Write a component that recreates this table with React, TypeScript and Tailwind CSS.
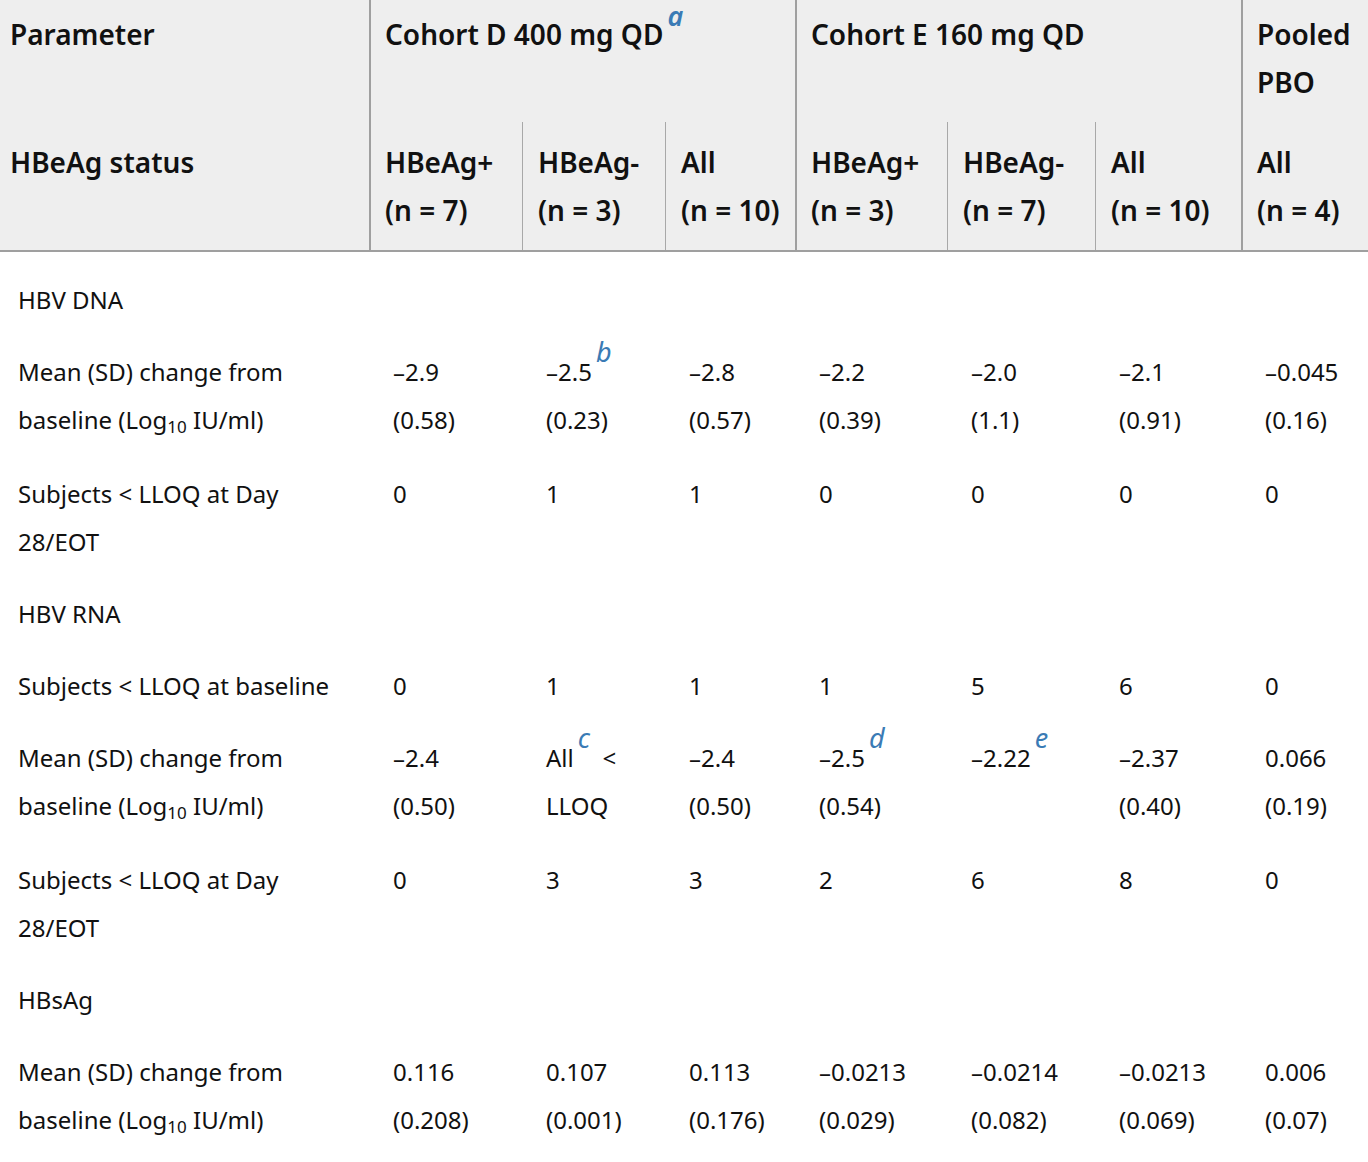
import type { ReactNode } from 'react'

const COLS = 'grid grid-cols-[369px_153px_143px_130px_152px_148px_146px_127px]'

function Note({ children }: { children: string }) {
  return (
    <span className="relative -top-[19px] ml-[4px] inline-block text-[27px] leading-none italic text-[#3a7bb5]">
      {children}
    </span>
  )
}

const meanLabel = (
  <>
    Mean (SD) change from
    <br />
    baseline (Log<sub className="text-[17px]">10</sub> IU/ml)
  </>
)

const lloqLabel = (
  <>
    Subjects &lt; LLOQ at Day
    <br />
    28/EOT
  </>
)

function two(a: ReactNode, b?: ReactNode) {
  return (
    <>
      {a}
      {b && (
        <>
          <br />
          {b}
        </>
      )}
    </>
  )
}

type Row = { label: ReactNode; cells?: ReactNode[]; tall?: boolean }

const rows: Row[] = [
  { label: 'HBV DNA' },
  {
    label: meanLabel,
    tall: true,
    cells: [
      two('–2.9', '(0.58)'),
      two(<>–2.5<Note>b</Note></>, '(0.23)'),
      two('–2.8', '(0.57)'),
      two('–2.2', '(0.39)'),
      two('–2.0', '(1.1)'),
      two('–2.1', '(0.91)'),
      two('–0.045', '(0.16)'),
    ],
  },
  { label: lloqLabel, cells: ['0', '1', '1', '0', '0', '0', '0'] },
  { label: 'HBV RNA' },
  { label: 'Subjects < LLOQ at baseline', cells: ['0', '1', '1', '1', '5', '6', '0'] },
  {
    label: meanLabel,
    tall: true,
    cells: [
      two('–2.4', '(0.50)'),
      two(<>All<Note>c</Note> &nbsp;&lt;</>, 'LLOQ'),
      two('–2.4', '(0.50)'),
      two(<>–2.5<Note>d</Note></>, '(0.54)'),
      two(<>–2.22<Note>e</Note></>),
      two('–2.37', '(0.40)'),
      two('0.066', '(0.19)'),
    ],
  },
  { label: lloqLabel, cells: ['0', '3', '3', '2', '6', '8', '0'] },
  { label: 'HBsAg' },
  {
    label: meanLabel,
    tall: true,
    cells: [
      two('0.116', '(0.208)'),
      two('0.107', '(0.001)'),
      two('0.113', '(0.176)'),
      two('–0.0213', '(0.029)'),
      two('–0.0214', '(0.082)'),
      two('–0.0213', '(0.069)'),
      two('0.006', '(0.07)'),
    ],
  },
]

const subHeads = [
  { t: 'HBeAg+', n: '(n = 7)', main: true },
  { t: 'HBeAg-', n: '(n = 3)' },
  { t: 'All', n: '(n = 10)' },
  { t: 'HBeAg+', n: '(n = 3)', main: true },
  { t: 'HBeAg-', n: '(n = 7)' },
  { t: 'All', n: '(n = 10)' },
  { t: 'All', n: '(n = 4)', main: true },
]

export default function App() {
  return (
    <div className="w-[1368px] bg-white font-['Noto_Sans',sans-serif] text-[#111]">
      <div className="border-b-2 border-[#9f9f9f] bg-[#eeeeee] text-[28px] font-semibold leading-[48px]">
        <div className={`${COLS} h-[122px]`}>
          <div className="pl-[10px] pt-[10px]">Parameter</div>
          <div className="col-span-3 border-l-2 border-[#9f9f9f] pl-[14px] pt-[10px]">
            Cohort D 400 mg QD
            <Note>a</Note>
          </div>
          <div className="col-span-3 border-l-2 border-[#9f9f9f] pl-[14px] pt-[10px]">Cohort E 160 mg QD</div>
          <div className="border-l-2 border-[#9f9f9f] pl-[14px] pt-[10px]">
            Pooled
            <br />
            PBO
          </div>
        </div>
        <div className={`${COLS} h-[128px]`}>
          <div className="pl-[10px] pt-4">HBeAg status</div>
          {subHeads.map((h, i) => (
            <div
              key={i}
              className={
                h.main
                  ? 'border-l-2 border-[#9f9f9f] pl-[14px] pt-4'
                  : 'border-l border-[#a8a8a8] pl-[15px] pt-4'
              }
            >
              {h.t}
              <br />
              {h.n}
            </div>
          ))}
        </div>
      </div>

      <div className="text-[24px] leading-[48px]">
        {rows.map((r, i) => (
          <div key={i} className={`${COLS} pt-6 ${r.tall ? 'pb-[2px]' : ''}`}>
            <div className="pl-[18px]">{r.label}</div>
            {r.cells?.map((c, j) => (
              <div key={j} className="pl-[24px]">
                {c}
              </div>
            ))}
          </div>
        ))}
      </div>
    </div>
  )
}
